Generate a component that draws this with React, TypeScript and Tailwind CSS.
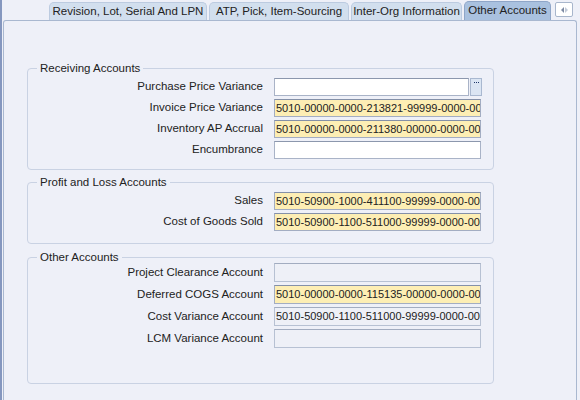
import React from 'react';

type Field = {
  label: string;
  value?: string;
  kind: 'white' | 'yellow' | 'disabled';
  lov?: boolean;
};

const receiving: Field[] = [
  { label: 'Purchase Price Variance', kind: 'white', lov: true },
  { label: 'Invoice Price Variance', value: '5010-00000-0000-213821-99999-0000-00000', kind: 'yellow' },
  { label: 'Inventory AP Accrual', value: '5010-00000-0000-211380-00000-0000-00000', kind: 'yellow' },
  { label: 'Encumbrance', kind: 'white' },
];

const profitLoss: Field[] = [
  { label: 'Sales', value: '5010-50900-1000-411100-99999-0000-00000', kind: 'yellow' },
  { label: 'Cost of Goods Sold', value: '5010-50900-1100-511000-99999-0000-00000', kind: 'yellow' },
];

const other: Field[] = [
  { label: 'Project Clearance Account', kind: 'disabled' },
  { label: 'Deferred COGS Account', value: '5010-00000-0000-115135-00000-0000-00000', kind: 'yellow' },
  { label: 'Cost Variance Account', value: '5010-50900-1100-511000-99999-0000-00000', kind: 'disabled' },
  { label: 'LCM Variance Account', kind: 'disabled' },
];

const tabs = [
  { name: 'Revision, Lot, Serial And LPN', width: 'w-[158px]' },
  { name: 'ATP, Pick, Item-Sourcing', width: 'w-[140px]' },
  { name: 'Inter-Org Information', width: 'w-[111px]' },
  { name: 'Other Accounts', width: 'w-[87px]', active: true },
];

function FieldRow({ field, height }: { field: Field; height: string }) {
  const box =
    field.kind === 'yellow'
      ? 'bg-[#fdeeb4] border-[#a3adc2] border-t-[#8490a8]'
      : field.kind === 'white'
      ? 'bg-white border-[#a9b3c7] border-t-[#8c97ad]'
      : 'bg-[#eef0f7] border-[#b7c1d3] border-t-[#a2acc0]';
  return (
    <div className={`flex items-center ${height}`}>
      <div className="w-[236px] pr-[1px] text-right text-[#222] whitespace-nowrap">{field.label}</div>
      <div className="ml-[10px] flex h-full">
        <div
          className={`h-full border overflow-hidden whitespace-nowrap pl-[1px] text-[11px] leading-[16px] text-[#222] ${box} ${
            field.lov ? 'w-[195px]' : 'w-[207px]'
          }`}
        >
          {field.value}
        </div>
        {field.lov && (
          <div className="w-[12px] h-full ml-[1px] bg-[#dbe5f3] border border-[#a9b8d0] flex justify-center gap-[1px] pt-[3px]">
            <span className="w-[1px] h-[1px] bg-[#1d3568]" />
            <span className="w-[1px] h-[1px] bg-[#1d3568]" />
            <span className="w-[1px] h-[1px] bg-[#1d3568]" />
          </div>
        )}
      </div>
    </div>
  );
}

function Group({
  title,
  fields,
  className,
  rowHeight,
}: {
  title: string;
  fields: Field[];
  className: string;
  rowHeight: string;
}) {
  return (
    <div className={`relative w-[467px] border border-[#c9d2e3] rounded-[4px] ${className}`}>
      <span className="absolute -top-[8px] left-[9px] px-[3px] bg-[#eef0f8] leading-[14px] text-[#222]">
        {title}
      </span>
      <div className="flex flex-col gap-[3px]">
        {fields.map((f) => (
          <FieldRow key={f.label} field={f} height={rowHeight} />
        ))}
      </div>
    </div>
  );
}

export default function App() {
  return (
    <div
      className="w-[580px] h-[400px] bg-[#eef0f8] flex overflow-hidden text-[11.5px]"
      style={{ fontFamily: '"Liberation Sans", Arial, sans-serif' }}
    >
      <div className="w-[2px] h-full bg-[#8597bf]" />
      <div className="flex-1 flex flex-col">
        <div className="h-[20px] flex items-end pl-[47px]">
          {tabs.map((t) => (
            <div
              key={t.name}
              className={`${t.width} mr-[2px] flex items-center justify-center rounded-t-[5px] border border-b-0 whitespace-nowrap text-[#222] ${
                t.active
                  ? 'h-[19px] bg-[#a9c1df] border-[#8fa6c8]'
                  : 'h-[18px] bg-[#d2dfee] border-[#bccbe0]'
              }`}
            >
              {t.name}
            </div>
          ))}
          <div className="ml-[2px] mb-[3px] w-[18px] h-[15px] bg-white border border-[#a8b6cc] rounded-[2px] flex items-center justify-center gap-[1px]">
            <span className="w-0 h-0 border-y-[3px] border-y-transparent border-r-[3px] border-r-[#7d8aa3]" />
            <span className="w-0 h-0 border-y-[3px] border-y-transparent border-l-[3px] border-l-[#c3cbd9]" />
          </div>
        </div>
        <div className="ml-[1px] w-[574px] flex-1 border border-b-0 border-[#a9b8d0] rounded-tl-[3px] rounded-tr-[3px] pl-[23px] pt-[47px]">
          <Group title="Receiving Accounts" fields={receiving} rowHeight="h-[18px]" className="pt-[9px] pb-[10px]" />
          <Group title="Profit and Loss Accounts" fields={profitLoss} rowHeight="h-[18px]" className="mt-[12px] pt-[9px] pb-[12px]" />
          <Group title="Other Accounts" fields={other} rowHeight="h-[19px]" className="mt-[13px] pt-[5px] pb-[35px]" />
        </div>
      </div>
    </div>
  );
}
